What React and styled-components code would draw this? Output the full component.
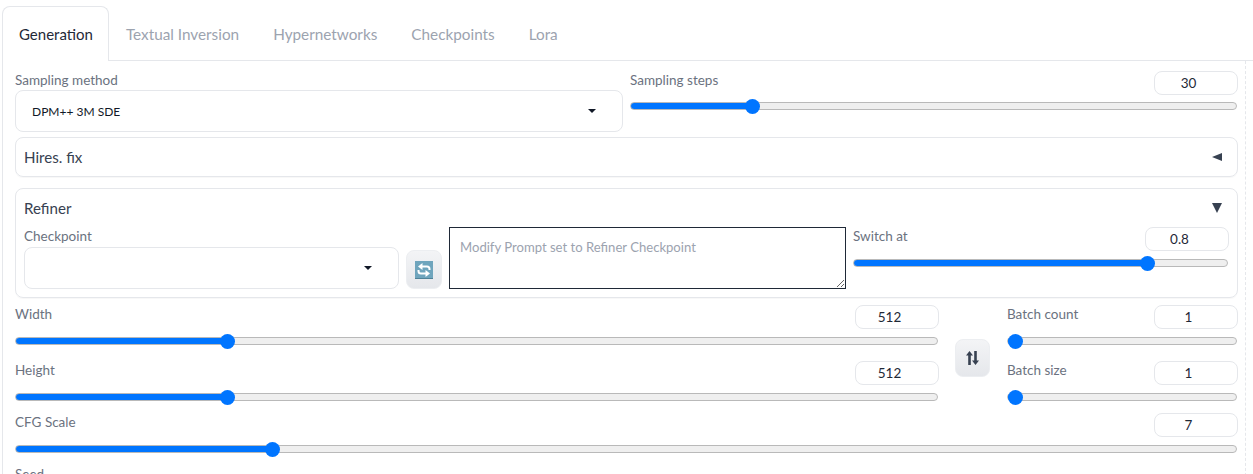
import styled, { createGlobalStyle } from "styled-components";

const GlobalStyle = createGlobalStyle`
  html, body {
    margin: 0;
    padding: 0;
    background: #ffffff;
    overflow: hidden;
  }
  body {
    font-family: "Lato", "Noto Sans", sans-serif;
    color: #1f2937;
  }
  * {
    box-sizing: border-box;
  }
`;

const Page = styled.div`
  width: 1253px;
  height: 474px;
  overflow: hidden;
  padding: 6px 0 0 2px;
`;

const TabBar = styled.div`
  display: flex;
  height: 55px;
  border-bottom: 1px solid #e5e7eb;
`;

const Tab = styled.div`
  display: flex;
  align-items: center;
  height: 55px;
  padding: ${(p) => (p.$active ? "0 15px 0 16px" : "0 16px")};
  font-size: ${(p) => (p.$active ? "15px" : "15.3px")};
  border: 1px solid ${(p) => (p.$active ? "#e5e7eb" : "transparent")};
  border-bottom: none;
  border-radius: 8px 8px 0 0;
  background: ${(p) => (p.$active ? "#ffffff" : "transparent")};
  color: ${(p) => (p.$active ? "#1f2937" : "#9ca3af")};
`;

const Panel = styled.div`
  margin-right: 7px;
  height: 420px;
  padding: 10px 7px 0 12px;
  border-left: 1px solid #e5e7eb;
  border-right: 1px dashed #e5e7eb;
`;

const TopRow = styled.div`
  display: flex;
  gap: 7px;
`;

const Column = styled.div`
  flex: 1;
  min-width: 0;
`;

const Label = styled.div`
  font-size: 13.5px;
  line-height: 19px;
  color: #6b7280;
`;

const CheckpointLabel = styled(Label)`
  margin-bottom: 1px;
`;

const SelectBox = styled.div`
  display: flex;
  align-items: center;
  justify-content: space-between;
  height: 42px;
  padding: 0 26px 0 16px;
  border: 1px solid #e5e7eb;
  border-radius: 8px;
  background: #ffffff;
  font-size: 12px;
  color: #111827;
`;

const Caret = styled.span`
  width: 0;
  height: 0;
  border-left: 4.5px solid transparent;
  border-right: 4.5px solid transparent;
  border-top: 4px solid #111827;
`;

const Accordion = styled.div`
  margin-top: ${(p) => p.$top}px;
  padding: 0 8px;
  border: 1px solid #e5e7eb;
  border-radius: 8px;
  box-shadow: 0 1px 1px rgba(0, 0, 0, 0.03);
`;

const AccordionHead = styled.div`
  display: flex;
  align-items: center;
  justify-content: space-between;
  height: 38px;
  padding-right: 7px;
  font-size: 15.1px;
  color: #374151;
`;

const FoldIcon = styled.span`
  width: 0;
  height: 0;
  ${(p) =>
    p.$open
      ? `
    border-left: 5.5px solid transparent;
    border-right: 5.5px solid transparent;
    border-top: 10px solid #374151;
  `
      : `
    border-top: 4.5px solid transparent;
    border-bottom: 4.5px solid transparent;
    border-right: 10px solid #374151;
  `}
`;

const RefinerGrid = styled.div`
  display: grid;
  grid-template-columns: 375px 36px 397px 376px;
  column-gap: 7px;
  padding-bottom: 8px;
`;

const CheckpointCol = styled.div`
  display: flex;
  flex-direction: column;
  justify-content: flex-end;
`;

const ToolButton = styled.button`
  display: flex;
  align-items: center;
  justify-content: center;
  width: ${(p) => p.$width}px;
  height: ${(p) => p.$height}px;
  padding: 0;
  border: 1px solid #eceef1;
  border-radius: 8px;
  background: linear-gradient(to bottom, #f3f4f6, #e5e7eb);
  color: #374151;
`;

const ButtonSlot = styled.div`
  display: flex;
  align-items: flex-end;
`;

const PromptBox = styled.textarea`
  display: block;
  width: 397px;
  height: 62px;
  padding: 10px;
  border: 1px solid #1f2937;
  border-radius: 0;
  outline: none;
  resize: both;
  background: #ffffff;
  font: inherit;
  font-size: 13.1px;
  line-height: 19px;
  &::placeholder {
    color: #9ca3af;
    opacity: 1;
  }
`;

const SliderHead = styled.div`
  display: flex;
  justify-content: space-between;
  height: 24px;
`;

const NumberBox = styled.input`
  width: 84px;
  height: 24px;
  padding: 0 15px 0 0;
  border: 1px solid #e5e7eb;
  border-radius: 8px;
  outline: none;
  text-align: center;
  font: inherit;
  font-size: 13.5px;
  color: #1f2937;
  background: #ffffff;
`;

const Range = styled.input`
  display: block;
  appearance: none;
  width: calc(100% - 1px);
  height: 16px;
  margin: ${(p) => p.$gap - 4}px 0 0;
  background: transparent;
  --stop: calc(7.5px + var(--pct) * (100% - 15px));
  &::-webkit-slider-runnable-track {
    height: 8px;
    border: 1px solid #b9b9b9;
    border-radius: 4px;
    background: linear-gradient(
      to right,
      #0075ff 0,
      #0075ff var(--stop),
      #efefef var(--stop)
    );
  }
  &::-webkit-slider-thumb {
    appearance: none;
    width: 15px;
    height: 15px;
    margin: -4.5px 0 0 -0.5px;
    border-radius: 50%;
    background: #0075ff;
  }
`;

const SizeRow = styled.div`
  display: flex;
  margin-top: 7px;
`;

const SizeColumn = styled.div`
  display: flex;
  flex-direction: column;
  gap: 12px;
  ${(p) => (p.$width ? `width: ${p.$width}px;` : "flex: 1;")}
`;

const SwapSlot = styled.div`
  display: flex;
  align-items: center;
  width: 68px;
  padding: 6px 17px 0 16px;
`;

const Block = styled.div`
  margin-top: 8px;
`;

function Slider({ label, value, min, max, step = 1, gap = 8 }) {
  const pct = (value - min) / (max - min);
  return (
    <div>
      <SliderHead>
        <Label>{label}</Label>
        <NumberBox defaultValue={value} />
      </SliderHead>
      <Range
        type="range"
        $gap={gap}
        min={min}
        max={max}
        step={step}
        defaultValue={value}
        style={{ "--pct": pct }}
      />
    </div>
  );
}

function RefreshIcon() {
  return (
    <svg width="18" height="18" viewBox="0 0 18 18">
      <rect width="18" height="18" fill="#6fa5bd" />
      <rect y="17" width="18" height="1" fill="#4f8298" />
      <path d="M7 5.5h5a2.5 2.5 0 0 1 2.5 2.5v1" fill="none" stroke="#fff" strokeWidth="2" />
      <path d="M7.5 2L3 5.5 7.5 9z" fill="#fff" />
      <path d="M11 12.5H6A2.5 2.5 0 0 1 3.5 10V9" fill="none" stroke="#fff" strokeWidth="2" />
      <path d="M10.5 9l4.5 3.5-4.5 3.5z" fill="#fff" />
    </svg>
  );
}

function SwapIcon() {
  return (
    <svg width="13" height="14" viewBox="0 0 13 14" fill="#374151">
      <path d="M2.2 14V4.5H0L3.5 0 7 4.5H4.8V14z" />
      <path d="M8.2 0v9.5H6L9.5 14 13 9.5h-2.2V0z" />
    </svg>
  );
}

export default function App() {
  return (
    <Page>
      <GlobalStyle />
      <TabBar>
        <Tab $active>Generation</Tab>
        <Tab>Textual Inversion</Tab>
        <Tab>Hypernetworks</Tab>
        <Tab>Checkpoints</Tab>
        <Tab>Lora</Tab>
      </TabBar>
      <Panel>
        <TopRow>
          <Column>
            <Label>Sampling method</Label>
            <SelectBox>
              DPM++ 3M SDE
              <Caret />
            </SelectBox>
          </Column>
          <Column>
            <Slider label="Sampling steps" value={30} min={1} max={150} gap={7} />
          </Column>
        </TopRow>

        <Accordion $top={5}>
          <AccordionHead>
            Hires. fix
            <FoldIcon />
          </AccordionHead>
        </Accordion>

        <Accordion $top={11}>
          <AccordionHead>
            Refiner
            <FoldIcon $open />
          </AccordionHead>
          <RefinerGrid>
            <CheckpointCol>
              <CheckpointLabel>Checkpoint</CheckpointLabel>
              <SelectBox>
                <span />
                <Caret />
              </SelectBox>
            </CheckpointCol>
            <ButtonSlot>
              <ToolButton $width={36} $height={39}>
                <RefreshIcon />
              </ToolButton>
            </ButtonSlot>
            <PromptBox placeholder="Modify Prompt set to Refiner Checkpoint" />
            <Slider label="Switch at" value={0.8} min={0} max={1} step={0.01} />
          </RefinerGrid>
        </Accordion>

        <SizeRow>
          <SizeColumn $width={924}>
            <Slider label="Width" value={512} min={64} max={2048} />
            <Slider label="Height" value={512} min={64} max={2048} />
          </SizeColumn>
          <SwapSlot>
            <ToolButton $width={35} $height={38}>
              <SwapIcon />
            </ToolButton>
          </SwapSlot>
          <SizeColumn>
            <Slider label="Batch count" value={1} min={1} max={100} />
            <Slider label="Batch size" value={1} min={1} max={8} />
          </SizeColumn>
        </SizeRow>

        <Block>
          <Slider label="CFG Scale" value={7} min={1} max={30} />
        </Block>
        <Block>
          <Label>Seed</Label>
        </Block>
      </Panel>
    </Page>
  );
}
